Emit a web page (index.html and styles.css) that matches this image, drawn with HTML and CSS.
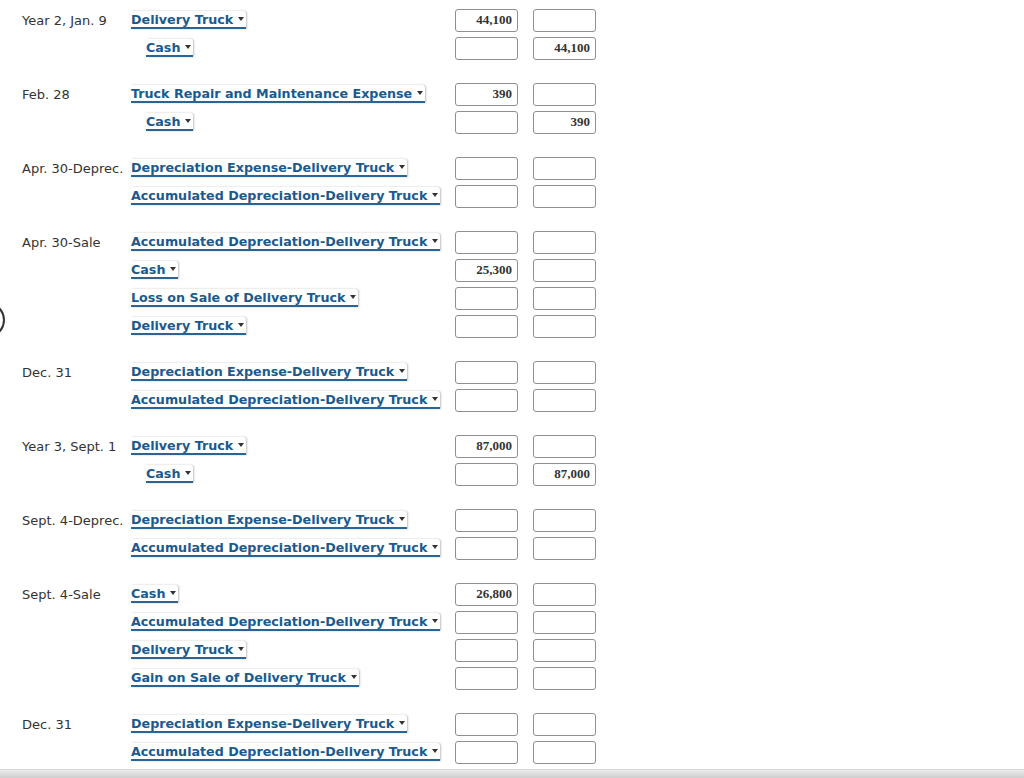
FILE: index.html
```html
<!DOCTYPE html>
<html lang="en">
<head>
    <meta charset="UTF-8">
    <title>Journal Entries</title>
    <link rel="stylesheet" href="styles.css">
</head>
<body>
    <div class="pager-edge"></div>

    <div class="journal">
        <!-- Purchase -->
        <div class="entry">
            <div class="line">
                <span class="date">Year 2, Jan. 9</span>
                <div class="acct-cell"><span class="account">Delivery Truck<i class="caret"></i></span></div>
                <input class="amount" type="text" value="44,100" readonly>
                <input class="amount" type="text" value="" readonly>
            </div>
            <div class="line">
                <span class="date"></span>
                <div class="acct-cell credit"><span class="account">Cash<i class="caret"></i></span></div>
                <input class="amount" type="text" value="" readonly>
                <input class="amount" type="text" value="44,100" readonly>
            </div>
        </div>

        <div class="entry">
            <div class="line">
                <span class="date">Feb. 28</span>
                <div class="acct-cell"><span class="account">Truck Repair and Maintenance Expense<i class="caret"></i></span></div>
                <input class="amount" type="text" value="390" readonly>
                <input class="amount" type="text" value="" readonly>
            </div>
            <div class="line">
                <span class="date"></span>
                <div class="acct-cell credit"><span class="account">Cash<i class="caret"></i></span></div>
                <input class="amount" type="text" value="" readonly>
                <input class="amount" type="text" value="390" readonly>
            </div>
        </div>

        <div class="entry">
            <div class="line">
                <span class="date">Apr. 30-Deprec.</span>
                <div class="acct-cell"><span class="account">Depreciation Expense-Delivery Truck<i class="caret"></i></span></div>
                <input class="amount" type="text" value="" readonly>
                <input class="amount" type="text" value="" readonly>
            </div>
            <div class="line">
                <span class="date"></span>
                <div class="acct-cell"><span class="account">Accumulated Depreciation-Delivery Truck<i class="caret"></i></span></div>
                <input class="amount" type="text" value="" readonly>
                <input class="amount" type="text" value="" readonly>
            </div>
        </div>

        <div class="entry">
            <div class="line">
                <span class="date">Apr. 30-Sale</span>
                <div class="acct-cell"><span class="account">Accumulated Depreciation-Delivery Truck<i class="caret"></i></span></div>
                <input class="amount" type="text" value="" readonly>
                <input class="amount" type="text" value="" readonly>
            </div>
            <div class="line">
                <span class="date"></span>
                <div class="acct-cell"><span class="account">Cash<i class="caret"></i></span></div>
                <input class="amount" type="text" value="25,300" readonly>
                <input class="amount" type="text" value="" readonly>
            </div>
            <div class="line">
                <span class="date"></span>
                <div class="acct-cell"><span class="account">Loss on Sale of Delivery Truck<i class="caret"></i></span></div>
                <input class="amount" type="text" value="" readonly>
                <input class="amount" type="text" value="" readonly>
            </div>
            <div class="line">
                <span class="date"></span>
                <div class="acct-cell"><span class="account">Delivery Truck<i class="caret"></i></span></div>
                <input class="amount" type="text" value="" readonly>
                <input class="amount" type="text" value="" readonly>
            </div>
        </div>

        <div class="entry">
            <div class="line">
                <span class="date">Dec. 31</span>
                <div class="acct-cell"><span class="account">Depreciation Expense-Delivery Truck<i class="caret"></i></span></div>
                <input class="amount" type="text" value="" readonly>
                <input class="amount" type="text" value="" readonly>
            </div>
            <div class="line">
                <span class="date"></span>
                <div class="acct-cell"><span class="account">Accumulated Depreciation-Delivery Truck<i class="caret"></i></span></div>
                <input class="amount" type="text" value="" readonly>
                <input class="amount" type="text" value="" readonly>
            </div>
        </div>

        <!-- Year 3 -->
        <div class="entry">
            <div class="line">
                <span class="date">Year 3, Sept. 1</span>
                <div class="acct-cell"><span class="account">Delivery Truck<i class="caret"></i></span></div>
                <input class="amount" type="text" value="87,000" readonly>
                <input class="amount" type="text" value="" readonly>
            </div>
            <div class="line">
                <span class="date"></span>
                <div class="acct-cell credit"><span class="account">Cash<i class="caret"></i></span></div>
                <input class="amount" type="text" value="" readonly>
                <input class="amount" type="text" value="87,000" readonly>
            </div>
        </div>

        <div class="entry">
            <div class="line">
                <span class="date">Sept. 4-Deprec.</span>
                <div class="acct-cell"><span class="account">Depreciation Expense-Delivery Truck<i class="caret"></i></span></div>
                <input class="amount" type="text" value="" readonly>
                <input class="amount" type="text" value="" readonly>
            </div>
            <div class="line">
                <span class="date"></span>
                <div class="acct-cell"><span class="account">Accumulated Depreciation-Delivery Truck<i class="caret"></i></span></div>
                <input class="amount" type="text" value="" readonly>
                <input class="amount" type="text" value="" readonly>
            </div>
        </div>

        <div class="entry">
            <div class="line">
                <span class="date">Sept. 4-Sale</span>
                <div class="acct-cell"><span class="account">Cash<i class="caret"></i></span></div>
                <input class="amount" type="text" value="26,800" readonly>
                <input class="amount" type="text" value="" readonly>
            </div>
            <div class="line">
                <span class="date"></span>
                <div class="acct-cell"><span class="account">Accumulated Depreciation-Delivery Truck<i class="caret"></i></span></div>
                <input class="amount" type="text" value="" readonly>
                <input class="amount" type="text" value="" readonly>
            </div>
            <div class="line">
                <span class="date"></span>
                <div class="acct-cell"><span class="account">Delivery Truck<i class="caret"></i></span></div>
                <input class="amount" type="text" value="" readonly>
                <input class="amount" type="text" value="" readonly>
            </div>
            <div class="line">
                <span class="date"></span>
                <div class="acct-cell"><span class="account">Gain on Sale of Delivery Truck<i class="caret"></i></span></div>
                <input class="amount" type="text" value="" readonly>
                <input class="amount" type="text" value="" readonly>
            </div>
        </div>

        <div class="entry">
            <div class="line">
                <span class="date">Dec. 31</span>
                <div class="acct-cell"><span class="account">Depreciation Expense-Delivery Truck<i class="caret"></i></span></div>
                <input class="amount" type="text" value="" readonly>
                <input class="amount" type="text" value="" readonly>
            </div>
            <div class="line">
                <span class="date"></span>
                <div class="acct-cell"><span class="account">Accumulated Depreciation-Delivery Truck<i class="caret"></i></span></div>
                <input class="amount" type="text" value="" readonly>
                <input class="amount" type="text" value="" readonly>
            </div>
        </div>
    </div>

    <div class="scroll-shadow"></div>
</body>
</html>
```

FILE: styles.css
```css
body {
    margin: 0;
    padding: 0;
    background: #fff;
    font-family: "DejaVu Sans", Verdana, sans-serif;
    font-size: 13px;
    color: #333;
    overflow: hidden;
}

.journal {
    padding: 6px 0 0 22px;
}

.entry {
    margin-bottom: 18px;
}

.line {
    display: flex;
    align-items: center;
    height: 28px;
}

.date {
    width: 109px;
    flex: none;
    color: #333;
}

.acct-cell {
    width: 324px;
    flex: none;
}

.acct-cell.credit {
    padding-left: 15px;
    box-sizing: border-box;
}

/* dropdown look-alike: bold link text with a heavy underline */
.account {
    display: inline-flex;
    align-items: center;
    gap: 5px;
    padding: 1px 2px 0 0;
    font-weight: bold;
    font-size: 12.7px;
    color: #1b5a8c;
    background: #fff;
    border-bottom: 2px solid #2a6495;
    border-radius: 0 3px 0 0;
    box-shadow: 1px 0 2px rgba(0, 0, 0, 0.25);
    line-height: 15px;
}

.caret {
    width: 0;
    height: 0;
    border-left: 3.5px solid transparent;
    border-right: 3.5px solid transparent;
    border-top: 4px solid #333;
    margin-top: -2px;
}

.amount {
    width: 63px;
    height: 23px;
    box-sizing: border-box;
    margin: 0;
    padding: 0 5px 0 0;
    border: 1px solid #8f8f8f;
    border-radius: 3px;
    font-family: "Liberation Serif", "Times New Roman", serif;
    font-weight: bold;
    font-size: 13px;
    color: #333;
    text-align: right;
    background: #fff;
    outline: none;
}

.amount + .amount {
    margin-left: 15px;
}

/* partial pager button poking in from the left edge */
.pager-edge {
    position: absolute;
    left: -31px;
    top: 302px;
    width: 32px;
    height: 32px;
    border: 2px solid #333;
    border-radius: 50%;
}

.scroll-shadow {
    position: fixed;
    left: 0;
    right: 0;
    bottom: 0;
    height: 8px;
    background: linear-gradient(#ececec, #cdcdcd);
    border-top: 1px solid #d6d6d6;
}
```
